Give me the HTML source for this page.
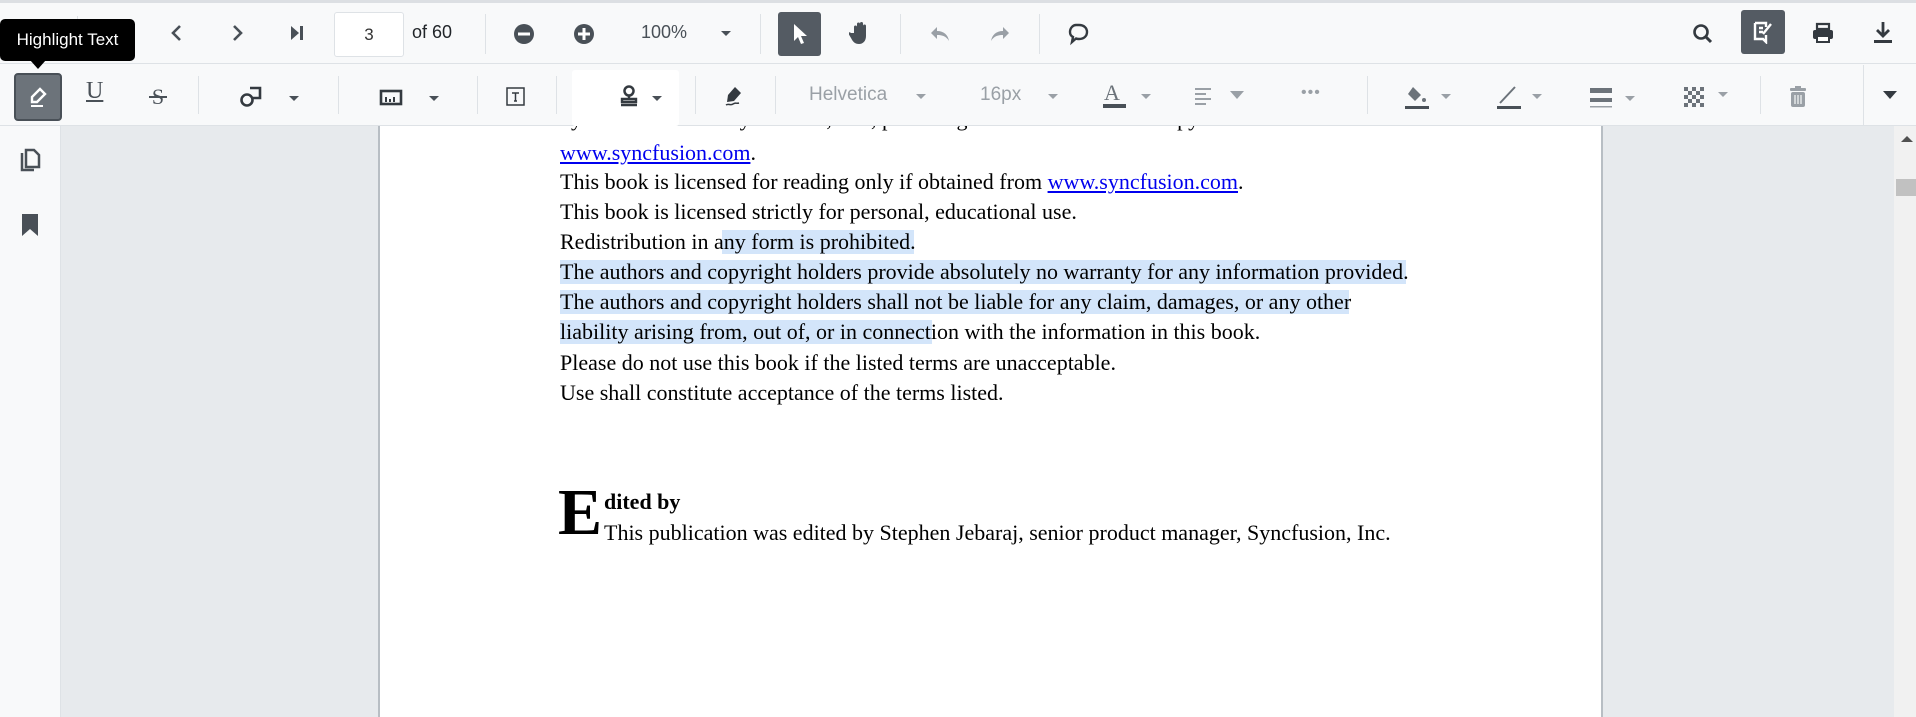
<!DOCTYPE html>
<html><head><meta charset="utf-8">
<style>
*{margin:0;padding:0;box-sizing:border-box}
body{width:1916px;height:717px;overflow:hidden;background:#e7eaed;font-family:"Liberation Sans",sans-serif;position:relative}
.a{position:absolute}
.tb{position:absolute;left:0;width:1916px;background:#f8f9fa;border-bottom:1px solid #dee2e6}
.sep{position:absolute;width:1px;background:#dee2e6}
.dd{position:absolute;width:0;height:0;border-left:5px solid transparent;border-right:5px solid transparent;border-top:5px solid #495057}
.ddg{border-top-color:#9aa0a6}
svg{position:absolute}
.pt{position:absolute;left:560px;font-family:"Liberation Serif",serif;font-size:22px;color:#000;white-space:nowrap;line-height:26px}
.hl{position:absolute;background:#d3e5fa;height:24px}
a{color:#0000ee;text-decoration:underline}
</style></head><body>
<div class="a" style="left:0;top:0;width:1916px;height:3px;background:#dcdfe3"></div>
<div class="tb" style="top:3px;height:61px"></div>
<div class="tb" style="top:64px;height:62px"></div>
<!-- row1 -->
<div class="sep" style="left:77px;top:16px;height:38px"></div>
<svg style="left:168px;top:24px" width="18" height="18" viewBox="0 0 18 18"><path d="M12 2L5 9l7 7" stroke="#495057" stroke-width="2.6" fill="none"/></svg>
<svg style="left:228px;top:24px" width="18" height="18" viewBox="0 0 18 18"><path d="M6 2l7 7-7 7" stroke="#495057" stroke-width="2.6" fill="none"/></svg>
<svg style="left:288px;top:24px" width="18" height="18" viewBox="0 0 18 18"><path d="M3 2l8 7-8 7z" fill="#495057"/><rect x="12" y="2" width="3" height="14" fill="#495057"/></svg>
<div class="a" style="left:334px;top:12px;width:70px;height:45px;background:#fff;border:1px solid #dee2e6;border-radius:3px;text-align:center;line-height:43px;font-size:17px;color:#333">3</div>
<div class="a" style="left:412px;top:22px;font-size:18px;color:#212529">of 60</div>
<div class="sep" style="left:485px;top:14px;height:40px"></div>
<svg style="left:513px;top:23px" width="22" height="22"><circle cx="11" cy="11" r="10" fill="#495057"/><rect x="5" y="9.5" width="12" height="3" fill="#fff"/></svg>
<svg style="left:573px;top:23px" width="22" height="22"><circle cx="11" cy="11" r="10" fill="#495057"/><rect x="5" y="9.5" width="12" height="3" fill="#fff"/><rect x="9.5" y="5" width="3" height="12" fill="#fff"/></svg>
<div class="a" style="left:641px;top:22px;font-size:18px;color:#495057">100%</div>
<div class="dd" style="left:721px;top:31px"></div>
<div class="sep" style="left:760px;top:14px;height:40px"></div>
<div class="a" style="left:778px;top:12px;width:43px;height:44px;background:#545b63;border-radius:3px"></div>
<svg style="left:790px;top:22px" width="20" height="24"><path d="M4 2v17l4-4 3 7 3-1-3-7h6z" fill="#fff"/></svg>
<svg style="left:849px;top:21px" width="22" height="24"><path d="M5 12V6a1.5 1.5 0 013 0v5V3a1.5 1.5 0 013 0v8V2.5a1.5 1.5 0 013 0V11V5a1.5 1.5 0 013 0v10c0 5-3 8-7 8s-6-2-8-6l-3-5c1-1 2-1 3 0z" fill="#495057"/></svg>
<div class="sep" style="left:900px;top:14px;height:40px"></div>
<svg style="left:929px;top:25px" width="22" height="18"><path d="M8 2L2 8l6 6V10c5 0 9 1 12 6-1-6-5-10-12-10z" fill="#9aa0a6"/></svg>
<svg style="left:989px;top:25px" width="22" height="18"><path d="M14 2l6 6-6 6V10C9 10 5 11 2 16c1-6 5-10 12-10z" fill="#9aa0a6"/></svg>
<div class="sep" style="left:1039px;top:14px;height:40px"></div>
<svg style="left:1067px;top:22px" width="24" height="24"><path d="M12 3c5 0 8 3 8 7s-3 7-8 7c-1 0-2 0-3-.5L5 20l1-5c-2-1-3-3-3-5 0-4 3-7 6-7z" fill="none" stroke="#343a40" stroke-width="2.4"/></svg>
<svg style="left:1691px;top:22px" width="24" height="24"><circle cx="10" cy="10" r="6.5" fill="none" stroke="#343a40" stroke-width="2.6"/><path d="M15 15l5 5" stroke="#343a40" stroke-width="3"/></svg>
<div class="a" style="left:1741px;top:10px;width:44px;height:44px;background:#545b63;border-radius:3px"></div>
<svg style="left:1752px;top:20px" width="22" height="24"><path d="M3 3h11v4M3 3v16h8l3 3v-7" stroke="#fff" stroke-width="2.4" fill="none"/><path d="M7 8h4M7 12h4M11 14l8-10" stroke="#fff" stroke-width="2.4"/></svg>
<svg style="left:1811px;top:22px" width="24" height="22"><path d="M6 2h12v5H6z" fill="none" stroke="#343a40" stroke-width="2.2"/><rect x="2" y="8" width="20" height="9" rx="2" fill="#343a40"/><rect x="6" y="14" width="12" height="6" fill="#fff" stroke="#343a40" stroke-width="2"/></svg>
<svg style="left:1871px;top:20px" width="24" height="26"><path d="M12 2v14M6 10l6 6 6-6" stroke="#343a40" stroke-width="2.8" fill="none"/><rect x="3" y="20" width="18" height="3" fill="#343a40"/></svg>
<!-- tooltip -->
<div class="a" style="left:0;top:19px;width:135px;height:42px;background:#000;border-radius:5px;color:#fff;font-size:17px;line-height:42px;text-align:center">Highlight Text</div>
<div class="a" style="left:30px;top:60px;width:0;height:0;border-left:8px solid transparent;border-right:8px solid transparent;border-top:9px solid #000"></div>
<!-- row2 -->
<div class="a" style="left:14px;top:73px;width:48px;height:48px;background:#6c737a;border:2px solid #495057;border-radius:4px"></div>
<svg style="left:27px;top:86px" width="22" height="22"><path d="M13 3l5 5-8 8H5v-5z" fill="none" stroke="#fff" stroke-width="2.4"/><path d="M4 20h12" stroke="#fff" stroke-width="2"/></svg>
<div class="a" style="left:86px;top:78px;font-family:'Liberation Serif',serif;font-size:24px;color:#495057;text-decoration:underline">U</div>
<svg style="left:146px;top:84px" width="24" height="26"><text x="12" y="20" text-anchor="middle" font-family="Liberation Serif" font-size="22" fill="#495057">S</text><rect x="3" y="12" width="18" height="2" fill="#495057"/></svg>
<div class="sep" style="left:198px;top:76px;height:38px"></div>
<svg style="left:239px;top:85px" width="26" height="24"><circle cx="8" cy="15" r="5.5" fill="none" stroke="#343a40" stroke-width="2.6"/><path d="M11 3h10v10h-7" fill="none" stroke="#343a40" stroke-width="2.6"/></svg>
<div class="dd" style="left:289px;top:96px"></div>
<div class="sep" style="left:338px;top:76px;height:38px"></div>
<svg style="left:379px;top:88px" width="24" height="18"><rect x="2" y="3" width="20" height="13" fill="none" stroke="#343a40" stroke-width="2.6"/><path d="M7 9v5M11 11v3M15 9v5" stroke="#343a40" stroke-width="2"/></svg>
<div class="dd" style="left:429px;top:96px"></div>
<div class="sep" style="left:477px;top:76px;height:38px"></div>
<svg style="left:504px;top:85px" width="24" height="24"><rect x="3" y="3" width="17" height="17" fill="none" stroke="#343a40" stroke-width="1.5"/><path d="M8 8h7M11.5 8v8M10 16h3" stroke="#343a40" stroke-width="1.5"/></svg>
<div class="sep" style="left:556px;top:76px;height:38px"></div>
<div class="a" style="left:572px;top:70px;width:107px;height:56px;background:#fff;border-radius:3px"></div>
<svg style="left:617px;top:84px" width="24" height="26"><circle cx="12" cy="7" r="4.5" fill="none" stroke="#343a40" stroke-width="2.5"/><path d="M12 11v4M5 15h14v3H5zM4 21h16" stroke="#343a40" stroke-width="2.4" fill="none"/></svg>
<div class="dd" style="left:652px;top:96px"></div>
<div class="sep" style="left:695px;top:76px;height:38px"></div>
<svg style="left:721px;top:83px" width="26" height="26"><path d="M14 4l6 6-7 8-7 1 1-7z" fill="#343a40"/><path d="M5 22c3-2 4 1 7-1s3 0 6-1" stroke="#343a40" stroke-width="1.5" fill="none"/></svg>
<div class="sep" style="left:775px;top:76px;height:38px"></div>
<div class="a" style="left:809px;top:84px;font-size:19px;color:#9aa0a6">Helvetica</div>
<div class="dd ddg" style="left:916px;top:94px"></div>
<div class="a" style="left:980px;top:84px;font-size:19px;color:#9aa0a6">16px</div>
<div class="dd ddg" style="left:1048px;top:94px"></div>
<div class="a" style="left:1104px;top:80px;font-family:'Liberation Serif',serif;font-size:22px;color:#6c737a">A</div>
<div class="a" style="left:1103px;top:104px;width:23px;height:4px;background:#495057"></div>
<div class="dd ddg" style="left:1141px;top:94px"></div>
<svg style="left:1193px;top:86px" width="22" height="20"><path d="M2 3h16M2 8h11M2 13h16M2 18h11" stroke="#9aa0a6" stroke-width="2"/></svg>
<div class="a" style="left:1230px;top:91px;width:0;height:0;border-left:7px solid transparent;border-right:7px solid transparent;border-top:8px solid #9aa0a6"></div>
<div class="a" style="left:1301px;top:84px;font-size:16px;color:#9aa0a6;letter-spacing:1px">&#8226;&#8226;&#8226;</div>
<div class="sep" style="left:1367px;top:76px;height:38px"></div>
<svg style="left:1402px;top:84px" width="28" height="28"><path d="M11 3l8 8-6 6-7-7z" fill="#6c737a"/><circle cx="22" cy="16" r="2" fill="#6c737a"/><rect x="3" y="22" width="24" height="3" fill="#495057"/></svg>
<div class="dd ddg" style="left:1441px;top:94px"></div>
<svg style="left:1495px;top:84px" width="26" height="28"><path d="M5 19L20 3" stroke="#6c737a" stroke-width="2"/><rect x="2" y="22" width="24" height="3" fill="#495057"/></svg>
<div class="dd ddg" style="left:1532px;top:94px"></div>
<svg style="left:1588px;top:86px" width="24" height="24"><rect x="2" y="2" width="22" height="5" fill="#6c737a"/><rect x="2" y="12" width="22" height="4" fill="#6c737a"/><rect x="2" y="20" width="22" height="1.5" fill="#9aa0a6"/></svg>
<div class="dd ddg" style="left:1625px;top:96px"></div>
<svg style="left:1683px;top:86px" width="22" height="22"><g fill="#6c737a"><rect x="1" y="1" width="4" height="4"/><rect x="9" y="1" width="4" height="4"/><rect x="17" y="1" width="4" height="4"/><rect x="5" y="5" width="4" height="4"/><rect x="13" y="5" width="4" height="4"/><rect x="1" y="9" width="4" height="4"/><rect x="9" y="9" width="4" height="4"/><rect x="17" y="9" width="4" height="4"/><rect x="5" y="13" width="4" height="4"/><rect x="13" y="13" width="4" height="4"/><rect x="1" y="17" width="4" height="4"/><rect x="9" y="17" width="4" height="4"/><rect x="17" y="17" width="4" height="4"/></g></svg>
<div class="dd ddg" style="left:1718px;top:92px"></div>
<div class="sep" style="left:1760px;top:76px;height:38px"></div>
<svg style="left:1788px;top:85px" width="20" height="24"><rect x="2" y="3" width="16" height="3" rx="1" fill="#9aa0a6"/><rect x="7" y="1" width="6" height="3" fill="#9aa0a6"/><rect x="3" y="7" width="14" height="15" rx="2" fill="#9aa0a6"/><path d="M7 10v9M10 10v9M13 10v9" stroke="#f8f9fa" stroke-width="1.2"/></svg>
<div class="sep" style="left:1863px;top:65px;height:60px"></div>
<div class="a" style="left:1883px;top:91px;width:0;height:0;border-left:7px solid transparent;border-right:7px solid transparent;border-top:8px solid #343a40"></div>
<!-- sidebar -->
<div class="a" style="left:0;top:126px;width:61px;height:591px;background:#f8f9fa;border-right:1px solid #dee2e6"></div>
<svg style="left:18px;top:148px" width="24" height="28"><path d="M4 5v17h12" stroke="#495057" stroke-width="2.5" fill="none"/><path d="M8 2h8l5 5v12H8z" fill="none" stroke="#495057" stroke-width="2.5"/></svg>
<svg style="left:20px;top:213px" width="20" height="24"><path d="M2 1h16v22l-8-7-8 7z" fill="#495057"/></svg>
<!-- page -->
<div class="a" style="left:378px;top:126px;width:1225px;height:591px;background:#fff;border-left:2px solid #b8bec4;border-right:2px solid #b8bec4"></div>
<div class="hl" style="left:722px;top:230px;width:192px"></div>
<div class="hl" style="left:560px;top:260px;width:846px"></div>
<div class="hl" style="left:560px;top:290px;width:789px"></div>
<div class="hl" style="left:560px;top:320px;width:372px"></div>
<div class="a" style="left:378px;top:126px;width:1225px;height:10px;overflow:hidden"><div class="pt" style="left:182px;top:-20px">by the authors and Syncfusion, Inc., providing that the document is copy</div></div>
<div class="pt" style="top:140px"><a>www.syncfusion.com</a>.</div>
<div class="pt" style="top:169px">This book is licensed for reading only if obtained from <a>www.syncfusion.com</a>.</div>
<div class="pt" style="top:199px">This book is licensed strictly for personal, educational use.</div>
<div class="pt" style="top:229px">Redistribution in any form is prohibited.</div>
<div class="pt" style="top:259px">The authors and copyright holders provide absolutely no warranty for any information provided.</div>
<div class="pt" style="top:289px">The authors and copyright holders shall not be liable for any claim, damages, or any other</div>
<div class="pt" style="top:319px">liability arising from, out of, or in connection with the information in this book.</div>
<div class="pt" style="top:350px">Please do not use this book if the listed terms are unacceptable.</div>
<div class="pt" style="top:380px">Use shall constitute acceptance of the terms listed.</div>
<div class="a" style="left:558px;top:478px;font-family:'Liberation Serif',serif;font-weight:bold;font-size:66px;line-height:70px">E</div>
<div class="pt" style="left:604px;top:489px;font-weight:bold">dited by</div>
<div class="pt" style="left:604px;top:520px">This publication was edited by Stephen Jebaraj, senior product manager, Syncfusion, Inc.</div>
<!-- scrollbar -->
<div class="a" style="left:1894px;top:126px;width:22px;height:591px;background:#f1f1f1"></div>
<div class="a" style="left:1901px;top:136px;width:0;height:0;border-left:6px solid transparent;border-right:6px solid transparent;border-bottom:6px solid #505050"></div>
<div class="a" style="left:1896px;top:179px;width:20px;height:17px;background:#c1c1c1"></div>
</body></html>
